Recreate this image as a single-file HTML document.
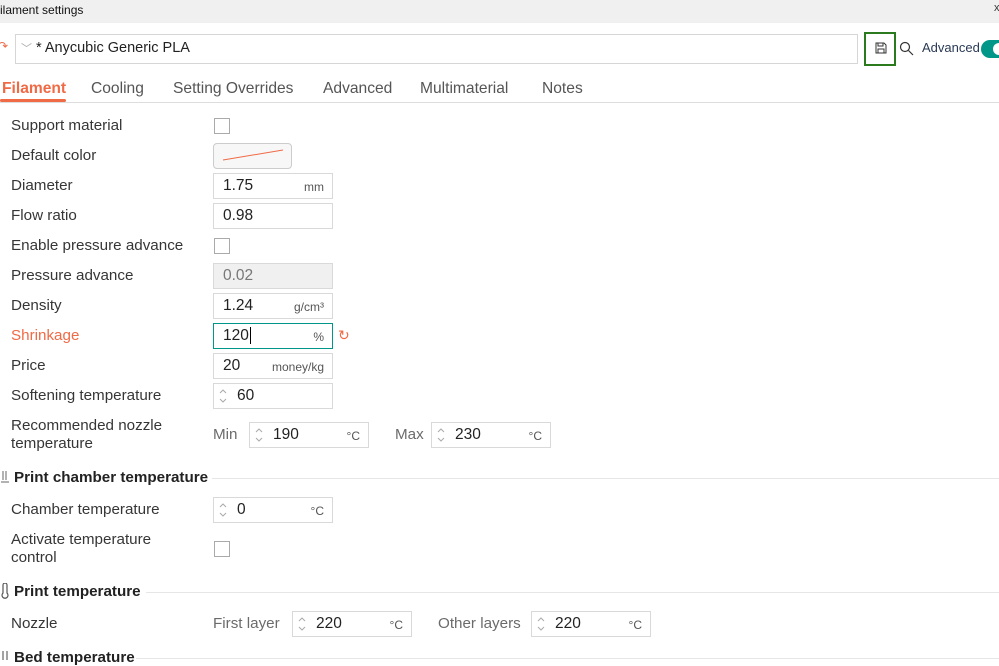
<!DOCTYPE html>
<html><head><meta charset="utf-8"><style>
*{box-sizing:border-box;margin:0;padding:0}
body{width:999px;height:660px;overflow:hidden;background:#fff;font-family:"Liberation Sans",sans-serif;color:#363636;position:relative;font-size:15.2px}
.a{position:absolute;white-space:nowrap}
.lbl{position:absolute;left:11px;font-size:15.2px;color:#363636;line-height:18px}
.box{position:absolute;border:1px solid #d9d9d9;height:26px;background:#fff;font-size:15.5px;color:#222}
.box .v{position:absolute;left:9px;top:3px}
.box .u{position:absolute;right:8px;top:6px;font-size:12px;color:#555}
.spin .v{left:23px}
.spin .ar{position:absolute;left:4px;top:3px}
.cb{position:absolute;left:214px;width:16px;height:16px;border:1px solid #aaa;background:#fff}
.sec{position:absolute;left:14px;font-weight:bold;font-size:15.2px;color:#222}
.line{position:absolute;height:1px;background:#e6e6e6;right:0}
.gray{color:#6b6b6b}
.tab{position:absolute;top:80px;font-size:15.6px;color:#555}
</style></head><body>
<div class="a" style="left:0;top:0;width:999px;height:23px;background:#f0f0f0"></div>
<div class="a" style="left:0;top:3px;font-size:12px;color:#111">ilament settings</div>
<div class="a" style="left:994px;top:2px;font-size:11px">x</div>
<div class="a" style="left:-2px;top:39px;font-size:12px;color:#f06a45">↷</div>
<div class="a" style="left:15px;top:34px;width:843px;height:30px;border:1px solid #d6d6d6"></div>
<div class="a" style="left:21px;top:40px;font-size:11px;color:#aaa">﹀</div>
<div class="a" style="left:36px;top:40px;font-size:14.5px;color:#222">* Anycubic Generic PLA</div>
<div class="a" style="left:864px;top:32px;width:32px;height:34px;border:2px solid #2b7a1d"></div>
<svg class="a" style="left:875px;top:42px" width="12" height="12" viewBox="0 0 12 12"><path d="M1 1h8l2 2v8H1z M3 1v3h5V1 M3 11V7h6v4" fill="none" stroke="#333" stroke-width="1"/></svg>
<svg class="a" style="left:899px;top:41px" width="16" height="16" viewBox="0 0 16 16"><circle cx="6" cy="6" r="4.5" fill="none" stroke="#333" stroke-width="1.2"/><path d="M9.5 9.5L14 14" stroke="#333" stroke-width="1.2"/></svg>
<div class="a" style="left:922px;top:40px;font-size:13px;color:#2a3a55">Advanced</div>
<div class="a" style="left:981px;top:40px;width:30px;height:18px;border-radius:9px;background:#009688"></div>
<div class="a" style="left:993px;top:43px;width:12px;height:12px;border-radius:6px;background:#fff"></div>

<div class="a" style="left:2px;top:80px;font-size:15.6px;font-weight:bold;color:#f06a45">Filament</div>
<div class="a" style="left:0;top:99px;width:66px;height:3px;border-radius:2px;background:#f06a45"></div>
<div class="tab" style="left:91px">Cooling</div>
<div class="tab" style="left:173px">Setting Overrides</div>
<div class="tab" style="left:323px">Advanced</div>
<div class="tab" style="left:420px">Multimaterial</div>
<div class="tab" style="left:542px">Notes</div>
<div class="a" style="left:0;top:102px;width:999px;height:1px;background:#ddd"></div>

<div class="lbl" style="top:117px">Support material</div><div class="cb" style="top:118px"></div>
<div class="lbl" style="top:147px">Default color</div>
<div class="a" style="left:213px;top:143px;width:79px;height:26px;border:1px solid #ccc;border-radius:4px;background:#f7f7f7"></div>
<svg class="a" style="left:222px;top:148px" width="62" height="14"><path d="M1 12L61 2" stroke="#f06a45" stroke-width="1"/></svg>
<div class="lbl" style="top:177px">Diameter</div><div class="box" style="left:213px;top:173px;width:120px"><span class="v">1.75</span><span class="u">mm</span></div>
<div class="lbl" style="top:207px">Flow ratio</div><div class="box" style="left:213px;top:203px;width:120px"><span class="v">0.98</span></div>
<div class="lbl" style="top:237px">Enable pressure advance</div><div class="cb" style="top:238px"></div>
<div class="lbl" style="top:267px">Pressure advance</div><div class="box" style="left:213px;top:263px;width:120px;background:#f0f0f0"><span class="v" style="color:#777">0.02</span></div>
<div class="lbl" style="top:297px">Density</div><div class="box" style="left:213px;top:293px;width:120px"><span class="v">1.24</span><span class="u">g/cm³</span></div>
<div class="lbl" style="top:327px;color:#f06a45">Shrinkage</div><div class="box" style="left:213px;top:323px;width:120px;border-color:#009688"><span class="v">120<span style="border-left:1px solid #000;margin-left:1px"></span></span><span class="u">%</span></div>
<div class="a" style="left:338px;top:327px;font-size:14px;color:#f06a45">↻</div>
<div class="lbl" style="top:357px">Price</div><div class="box" style="left:213px;top:353px;width:120px"><span class="v">20</span><span class="u">money/kg</span></div>
<div class="lbl" style="top:387px">Softening temperature</div><div class="box spin" style="left:213px;top:383px;width:120px"><svg class="ar" width="10" height="18"><path d="M2 6L5 3L8 6M2 12L5 15L8 12" fill="none" stroke="#aaa" stroke-width="1"/></svg><span class="v">60</span></div>
<div class="lbl" style="top:417px">Recommended nozzle<br>temperature</div>
<div class="a gray" style="left:213px;top:426px">Min</div>
<div class="box spin" style="left:249px;top:422px;width:120px"><svg class="ar" width="10" height="18"><path d="M2 6L5 3L8 6M2 12L5 15L8 12" fill="none" stroke="#aaa" stroke-width="1"/></svg><span class="v">190</span><span class="u">°C</span></div>
<div class="a gray" style="left:395px;top:426px">Max</div>
<div class="box spin" style="left:431px;top:422px;width:120px"><svg class="ar" width="10" height="18"><path d="M2 6L5 3L8 6M2 12L5 15L8 12" fill="none" stroke="#aaa" stroke-width="1"/></svg><span class="v">230</span><span class="u">°C</span></div>

<svg class="a" style="left:0;top:470px" width="10" height="14"><path d="M3 1v9M6 1v9M1 12h8" stroke="#666" stroke-width="1" fill="none"/></svg>
<div class="sec" style="top:469px">Print chamber temperature</div><div class="line" style="left:212px;top:478px"></div>
<div class="lbl" style="top:501px">Chamber temperature</div><div class="box spin" style="left:213px;top:497px;width:120px"><svg class="ar" width="10" height="18"><path d="M2 6L5 3L8 6M2 12L5 15L8 12" fill="none" stroke="#aaa" stroke-width="1"/></svg><span class="v">0</span><span class="u">°C</span></div>
<div class="lbl" style="top:531px">Activate temperature<br>control</div><div class="cb" style="top:541px"></div>
<svg class="a" style="left:0;top:583px" width="10" height="16"><path d="M3 2a2 2 0 0 1 4 0v8a3 3 0 1 1-4 0z" stroke="#555" stroke-width="1.2" fill="none"/></svg>
<div class="sec" style="top:583px">Print temperature</div><div class="line" style="left:146px;top:592px"></div>
<div class="lbl" style="top:615px">Nozzle</div>
<div class="a gray" style="left:213px;top:615px">First layer</div>
<div class="box spin" style="left:292px;top:611px;width:120px"><svg class="ar" width="10" height="18"><path d="M2 6L5 3L8 6M2 12L5 15L8 12" fill="none" stroke="#aaa" stroke-width="1"/></svg><span class="v">220</span><span class="u">°C</span></div>
<div class="a gray" style="left:438px;top:615px">Other layers</div>
<div class="box spin" style="left:531px;top:611px;width:120px"><svg class="ar" width="10" height="18"><path d="M2 6L5 3L8 6M2 12L5 15L8 12" fill="none" stroke="#aaa" stroke-width="1"/></svg><span class="v">220</span><span class="u">°C</span></div>
<svg class="a" style="left:0;top:650px" width="10" height="10"><path d="M3 1v9M7 1v9" stroke="#666" stroke-width="1.2"/></svg>
<div class="sec" style="top:649px">Bed temperature</div><div class="line" style="left:136px;top:658px"></div>
</body></html>
